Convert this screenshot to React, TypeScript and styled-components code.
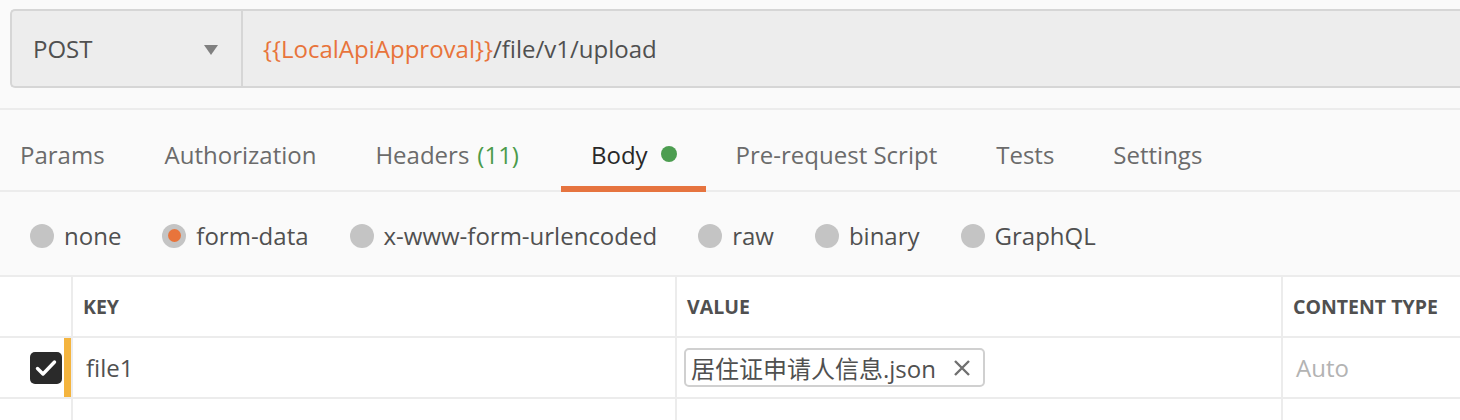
import styled, { createGlobalStyle } from 'styled-components'

const GlobalStyle = createGlobalStyle`
  html, body {
    margin: 0;
    padding: 0;
    background: #fafafa;
  }
  body {
    font-family: 'Open Sans', 'Noto Sans CJK SC', sans-serif;
    color: #505050;
    overflow: hidden;
  }
`

const tabs = ['Params', 'Authorization', 'Headers', 'Body', 'Pre-request Script', 'Tests', 'Settings']
const bodyTypes = ['none', 'form-data', 'x-www-form-urlencoded', 'raw', 'binary', 'GraphQL']

const App = () => {
  return (
    <>
      <GlobalStyle />
      <Page>
        <TopSection>
          <UrlBox>
            <MethodSelect>
              <span>POST</span>
              <Caret />
            </MethodSelect>
            <UrlInput>
              <Variable>{'{{LocalApiApproval}}'}</Variable>/file/v1/upload
            </UrlInput>
          </UrlBox>
        </TopSection>

        <TabBar>
          {tabs.map((t) => (
            <Tab key={t} $active={t === 'Body'}>
              {t}
              {t === 'Headers' && <Count>(11)</Count>}
              {t === 'Body' && <Dot />}
            </Tab>
          ))}
        </TabBar>

        <RadioRow>
          {bodyTypes.map((b) => (
            <RadioItem key={b}>
              <Radio $checked={b === 'form-data'} />
              {b}
            </RadioItem>
          ))}
        </RadioRow>

        <Table>
          <HeadCell />
          <HeadCell>KEY</HeadCell>
          <HeadCell>VALUE</HeadCell>
          <HeadCell>CONTENT TYPE</HeadCell>

          <CheckCell $marked>
            <Checkbox>
              <svg width="24" height="24" viewBox="0 0 24 24" fill="none">
                <path d="M3.5 12.5l5.5 5.5L20.5 6" stroke="#fff" strokeWidth="3.4" strokeLinecap="round" strokeLinejoin="round" />
              </svg>
            </Checkbox>
          </CheckCell>
          <Cell>file1</Cell>
          <Cell>
            <FileChip>
              居住证申请人信息.json
              <svg width="20" height="20" viewBox="0 0 20 20">
                <path d="M3 3L17 17M17 3L3 17" stroke="#707070" strokeWidth="2.4" />
              </svg>
            </FileChip>
          </Cell>
          <Cell $muted>Auto</Cell>

          <CheckCell />
          <Cell />
          <Cell />
          <Cell />
        </Table>
      </Page>
    </>
  )
}
export default App

const Page = styled.div`
  width: 1460px;
  height: 420px;
  overflow: hidden;
  background: #fafafa;
  font-size: 24px;
`

const TopSection = styled.div`
  height: 110px;
  padding: 9px 0 0 10px;
  box-sizing: border-box;
  border-bottom: 2px solid #ececec;
`

const UrlBox = styled.div`
  display: flex;
  height: 79px;
  box-sizing: border-box;
  background: #ededed;
  border: 2px solid #d6d6d6;
  border-right: none;
  border-radius: 5px 0 0 5px;
`

const MethodSelect = styled.div`
  width: 231px;
  box-sizing: border-box;
  display: flex;
  align-items: center;
  justify-content: space-between;
  padding: 0 23px 0 21px;
  border-right: 2px solid #d6d6d6;
  color: #505050;
`

const Caret = styled.span`
  width: 0;
  height: 0;
  border-left: 7.5px solid transparent;
  border-right: 7.5px solid transparent;
  border-top: 10px solid #808080;
  margin-top: 2px;
`

const UrlInput = styled.div`
  display: flex;
  align-items: center;
  padding-left: 20px;
  color: #505050;
`

const Variable = styled.span`
  color: #e8743b;
`

const TabBar = styled.div`
  display: flex;
  height: 82px;
  box-sizing: border-box;
  border-bottom: 2px solid #ececec;
`

const Tab = styled.div<{ $active?: boolean }>`
  display: flex;
  align-items: center;
  padding: 12px 29px 0 30px;
  margin-bottom: -2px;
  color: ${(p) => (p.$active ? '#282828' : '#6b6b6b')};
  border-bottom: 6px solid ${(p) => (p.$active ? '#e6743f' : 'transparent')};

  &:first-child {
    padding-left: 20px;
    padding-right: 30px;
  }
`

const Count = styled.span`
  color: #4a9b4a;
  margin-left: 8px;
  margin-right: 13px;
`

const Dot = styled.span`
  width: 16px;
  height: 16px;
  border-radius: 50%;
  background: #4c9d50;
  margin-left: 13px;
`

const RadioRow = styled.div`
  display: flex;
  align-items: center;
  gap: 41px;
  height: 83px;
  padding-left: 30px;
  padding-top: 4px;
  box-sizing: border-box;
`

const RadioItem = styled.div`
  display: flex;
  align-items: center;
  gap: 10px;
  color: #505050;
`

const Radio = styled.span<{ $checked?: boolean }>`
  width: 24px;
  height: 24px;
  border-radius: 50%;
  background: #c4c4c4;
  display: flex;
  align-items: center;
  justify-content: center;

  &::after {
    content: '';
    display: ${(p) => (p.$checked ? 'block' : 'none')};
    width: 13px;
    height: 13px;
    border-radius: 50%;
    background: #e8743b;
  }
`

const Table = styled.div`
  display: grid;
  grid-template-columns: 71px 604px 606px 1fr;
  grid-auto-rows: 61px;
  background: #fff;
  border-top: 2px solid #ececec;
`

const HeadCell = styled.div`
  display: flex;
  align-items: center;
  padding-left: 10px;
  font-size: 19.5px;
  font-weight: 700;
  color: #505050;
  border-bottom: 2px solid #ececec;
  border-left: 2px solid #ececec;

  &:first-child {
    border-left: none;
  }
`

const Cell = styled.div<{ $muted?: boolean }>`
  display: flex;
  align-items: center;
  padding-left: 13px;
  color: ${(p) => (p.$muted ? '#b3b3b3' : '#505050')};
  border-bottom: 2px solid #ececec;
  border-left: 2px solid #ececec;
`

const CheckCell = styled.div<{ $marked?: boolean }>`
  display: flex;
  align-items: center;
  justify-content: flex-end;
  padding-right: 9px;
  border-bottom: 2px solid #ececec;
  box-shadow: ${(p) => (p.$marked ? 'inset -7px 0 0 #f4b43e' : 'none')};
`

const Checkbox = styled.span`
  width: 32px;
  height: 32px;
  border-radius: 5px;
  background: #2a2a2a;
  display: flex;
  align-items: center;
  justify-content: center;
`

const FileChip = styled.div`
  display: flex;
  align-items: center;
  gap: 16px;
  height: 39px;
  box-sizing: border-box;
  padding: 0 11px 0 5px;
  margin-left: -6px;
  border: 2px solid #d0d0d0;
  border-radius: 5px;
  color: #505050;
  background: #fff;
`
